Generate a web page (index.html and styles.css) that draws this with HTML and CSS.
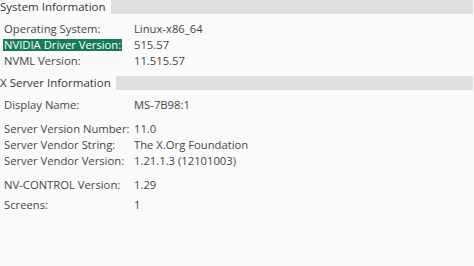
FILE: index.html
```html
<!DOCTYPE html>
<html lang="en">

<head>
     <meta charset="UTF-8">
     <title>NVIDIA X Server Settings - System Information</title>
     <link rel="stylesheet" href="styles.css">
</head>

<body>
     <section class="frame">
          <h2 class="frame-title"><span>System Information</span><i class="bar"></i></h2>
          <div class="group first">
               <div class="row"><span class="label">Operating System:</span><span class="value">Linux-x86_64</span></div>
               <div class="row"><span class="label"><span class="selected">NVIDIA Driver Version:</span></span><span class="value">515.57</span></div>
               <div class="row"><span class="label">NVML Version:</span><span class="value">11.515.57</span></div>
          </div>
     </section>

     <section class="frame">
          <h2 class="frame-title"><span>X Server Information</span><i class="bar"></i></h2>
          <div class="group first">
               <div class="row"><span class="label">Display Name:</span><span class="value">MS-7B98:1</span></div>
          </div>
          <div class="group">
               <div class="row"><span class="label">Server Version Number:</span><span class="value">11.0</span></div>
               <div class="row"><span class="label">Server Vendor String:</span><span class="value">The X.Org Foundation</span></div>
               <div class="row"><span class="label">Server Vendor Version:</span><span class="value">1.21.1.3 (12101003)</span></div>
          </div>
          <div class="group">
               <div class="row"><span class="label">NV-CONTROL Version:</span><span class="value">1.29</span></div>
          </div>
          <div class="group last">
               <div class="row"><span class="label">Screens:</span><span class="value">1</span></div>
          </div>
     </section>
</body>

</html>
```

FILE: styles.css
```css
:root {
     --FONT-FAMILY: 'Open Sans', 'Noto Sans', sans-serif;
     --BACKGROUND-color: #fafafa;
     --BAR-color: #dedede;
     --TEXT-color: #464646;
     --TITLE-color: #363636;
     --SELECTED-BACKGROUND-color: #16795a;
     --SELECTED-color: #ffffff;
}

* {
     margin: 0;
     padding: 0;
     box-sizing: border-box;
}

html,
body {
     background: var(--BACKGROUND-color);
}

body {
     font-family: var(--FONT-FAMILY);
     font-size: 11.25px;
     color: var(--TEXT-color);
     width: 474px;
     height: 266px;
     overflow: hidden;
     padding-right: 1px;
}

/** Cadres **/
.frame-title {
     display: flex;
     height: 14px;
     font-size: 11.5px;
     font-weight: 400;
     line-height: 14px;
     color: var(--TITLE-color);
}

.frame-title span {
     padding-right: 5px;
     white-space: nowrap;
}

.frame-title .bar {
     flex: 1;
     background-color: var(--BAR-color);
}

.frame + .frame {
     margin-top: 7px;
}

/** Lignes **/
.group {
     margin-top: 8px;
}

.group.first {
     margin-top: 7px;
}

.group.last {
     margin-top: 4px;
}

.row {
     display: grid;
     grid-template-columns: 130px 1fr;
     height: 16px;
     line-height: 16px;
     padding-left: 4px;
     white-space: nowrap;
}

.selected {
     display: inline-block;
     line-height: 12px;
     padding: 0 1px;
     margin-left: -1px;
     background-color: var(--SELECTED-BACKGROUND-color);
     color: var(--SELECTED-color);
}
```
